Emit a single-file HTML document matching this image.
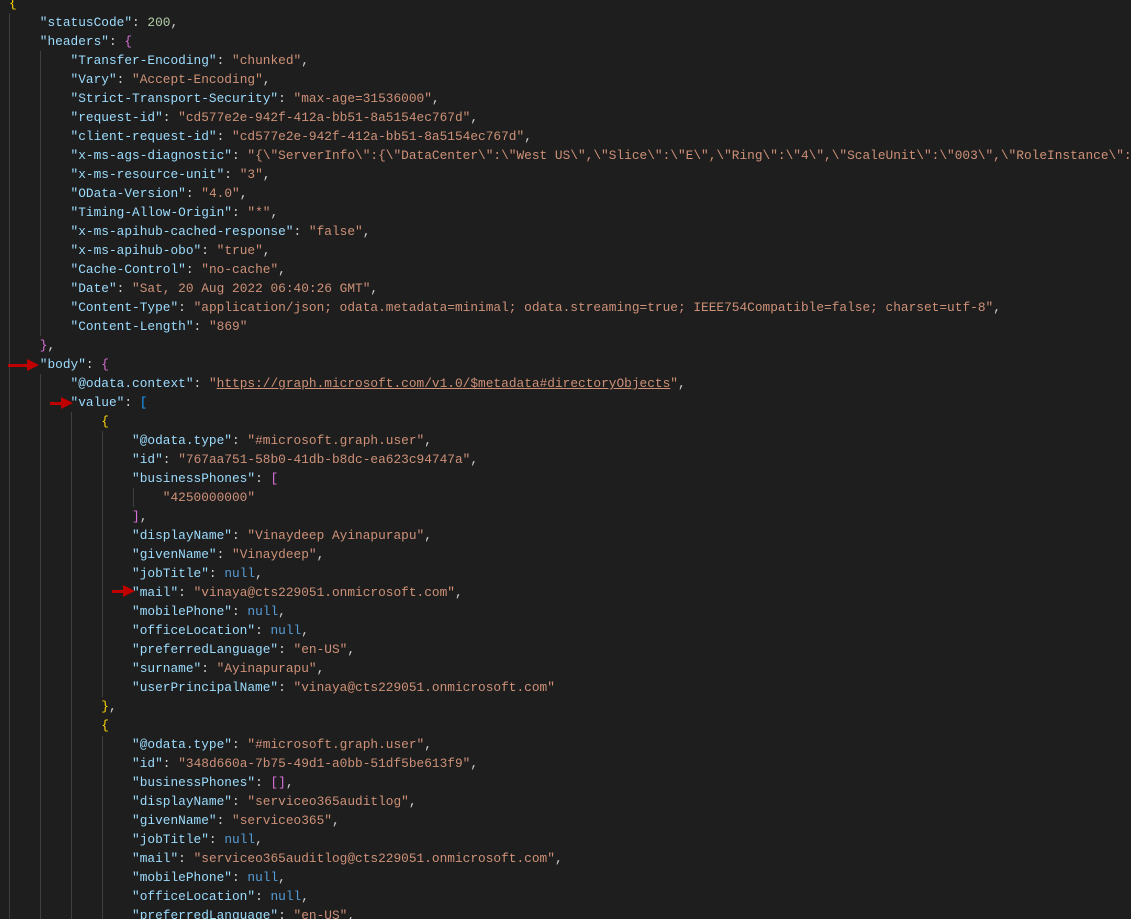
<!DOCTYPE html>
<html><head><meta charset="utf-8"><style>
html,body{margin:0;padding:0;background:#1e1e1e;width:1131px;height:919px;overflow:hidden;position:relative}
pre{position:absolute;left:9px;top:-6px;width:1122px;overflow:hidden;margin:0;font-family:"Liberation Mono",monospace;font-size:12.82px;line-height:19px;color:#d4d4d4;white-space:pre}
.k{color:#9cdcfe}.s{color:#ce9178}.n{color:#b5cea8}.b{color:#569cd6}
.y{color:#ffd700}.p{color:#da70d6}.l{color:#179fff}
.u{text-decoration:underline}
.g{position:absolute;width:1px;background:#404040}
.a{position:absolute;height:3px;background:#c00000}
.h{position:absolute;width:0;height:0;border-top:6px solid transparent;border-bottom:6px solid transparent;border-left:12px solid #c00000}
</style></head><body>
<div class="g" style="left:9px;top:13px;height:906px"></div>
<div class="g" style="left:40px;top:51px;height:285px"></div>
<div class="g" style="left:40px;top:374px;height:545px"></div>
<div class="g" style="left:71px;top:412px;height:507px"></div>
<div class="g" style="left:102px;top:431px;height:266px"></div>
<div class="g" style="left:102px;top:736px;height:183px"></div>
<div class="g" style="left:133px;top:488px;height:19px"></div>
<pre><span class="y">{</span>
    <span class="k">"statusCode"</span>: <span class="n">200</span>,
    <span class="k">"headers"</span>: <span class="p">{</span>
        <span class="k">"Transfer-Encoding"</span>: <span class="s">"chunked"</span>,
        <span class="k">"Vary"</span>: <span class="s">"Accept-Encoding"</span>,
        <span class="k">"Strict-Transport-Security"</span>: <span class="s">"max-age=31536000"</span>,
        <span class="k">"request-id"</span>: <span class="s">"cd577e2e-942f-412a-bb51-8a5154ec767d"</span>,
        <span class="k">"client-request-id"</span>: <span class="s">"cd577e2e-942f-412a-bb51-8a5154ec767d"</span>,
        <span class="k">"x-ms-ags-diagnostic"</span>: <span class="s">"{\"ServerInfo\":{\"DataCenter\":\"West US\",\"Slice\":\"E\",\"Ring\":\"4\",\"ScaleUnit\":\"003\",\"RoleInstance\":\"SJ1PEPF00001</span>
        <span class="k">"x-ms-resource-unit"</span>: <span class="s">"3"</span>,
        <span class="k">"OData-Version"</span>: <span class="s">"4.0"</span>,
        <span class="k">"Timing-Allow-Origin"</span>: <span class="s">"*"</span>,
        <span class="k">"x-ms-apihub-cached-response"</span>: <span class="s">"false"</span>,
        <span class="k">"x-ms-apihub-obo"</span>: <span class="s">"true"</span>,
        <span class="k">"Cache-Control"</span>: <span class="s">"no-cache"</span>,
        <span class="k">"Date"</span>: <span class="s">"Sat, 20 Aug 2022 06:40:26 GMT"</span>,
        <span class="k">"Content-Type"</span>: <span class="s">"application/json; odata.metadata=minimal; odata.streaming=true; IEEE754Compatible=false; charset=utf-8"</span>,
        <span class="k">"Content-Length"</span>: <span class="s">"869"</span>
    <span class="p">}</span>,
    <span class="k">"body"</span>: <span class="p">{</span>
        <span class="k">"@odata.context"</span>: <span class="s">"<span class="u">https://graph.microsoft.com/v1.0/$metadata#directoryObjects</span>"</span>,
        <span class="k">"value"</span>: <span class="l">[</span>
            <span class="y">{</span>
                <span class="k">"@odata.type"</span>: <span class="s">"#microsoft.graph.user"</span>,
                <span class="k">"id"</span>: <span class="s">"767aa751-58b0-41db-b8dc-ea623c94747a"</span>,
                <span class="k">"businessPhones"</span>: <span class="p">[</span>
                    <span class="s">"4250000000"</span>
                <span class="p">]</span>,
                <span class="k">"displayName"</span>: <span class="s">"Vinaydeep Ayinapurapu"</span>,
                <span class="k">"givenName"</span>: <span class="s">"Vinaydeep"</span>,
                <span class="k">"jobTitle"</span>: <span class="b">null</span>,
                <span class="k">"mail"</span>: <span class="s">"vinaya@cts229051.onmicrosoft.com"</span>,
                <span class="k">"mobilePhone"</span>: <span class="b">null</span>,
                <span class="k">"officeLocation"</span>: <span class="b">null</span>,
                <span class="k">"preferredLanguage"</span>: <span class="s">"en-US"</span>,
                <span class="k">"surname"</span>: <span class="s">"Ayinapurapu"</span>,
                <span class="k">"userPrincipalName"</span>: <span class="s">"vinaya@cts229051.onmicrosoft.com"</span>
            <span class="y">}</span>,
            <span class="y">{</span>
                <span class="k">"@odata.type"</span>: <span class="s">"#microsoft.graph.user"</span>,
                <span class="k">"id"</span>: <span class="s">"348d660a-7b75-49d1-a0bb-51df5be613f9"</span>,
                <span class="k">"businessPhones"</span>: <span class="p">[]</span>,
                <span class="k">"displayName"</span>: <span class="s">"serviceo365auditlog"</span>,
                <span class="k">"givenName"</span>: <span class="s">"serviceo365"</span>,
                <span class="k">"jobTitle"</span>: <span class="b">null</span>,
                <span class="k">"mail"</span>: <span class="s">"serviceo365auditlog@cts229051.onmicrosoft.com"</span>,
                <span class="k">"mobilePhone"</span>: <span class="b">null</span>,
                <span class="k">"officeLocation"</span>: <span class="b">null</span>,
                <span class="k">"preferredLanguage"</span>: <span class="s">"en-US"</span>,
</pre>
<div class="a" style="left:8px;top:364px;width:20px"></div><div class="h" style="left:27px;top:359px"></div>
<div class="a" style="left:50px;top:402px;width:12px"></div><div class="h" style="left:61px;top:397px"></div>
<div class="a" style="left:112px;top:590px;width:12px"></div><div class="h" style="left:123px;top:585px"></div>
</body></html>
